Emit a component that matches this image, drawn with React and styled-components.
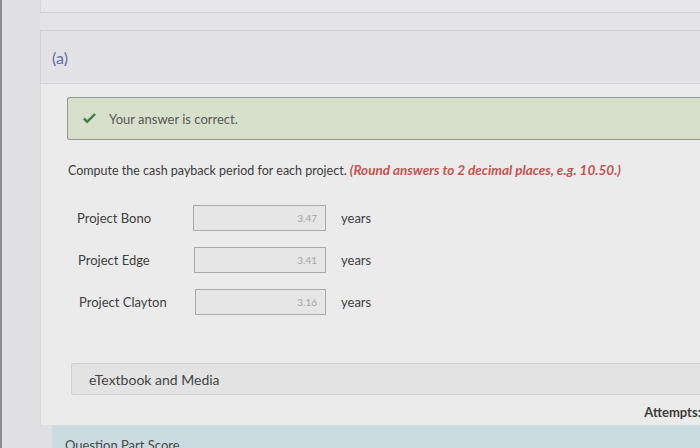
import React from "react";
import styled, { createGlobalStyle } from "styled-components";

const Global = createGlobalStyle`
  html, body {
    margin: 0;
    padding: 0;
    width: 700px;
    height: 448px;
    overflow: hidden;
    background: #e0dfe2;
    font-family: Lato, "Open Sans", "Liberation Sans", sans-serif;
  }
`;

const Page = styled.div`
  display: flex;
  width: 700px;
  height: 448px;
  overflow: hidden;
`;

const Rail = styled.div`
  width: 38px;
  flex-shrink: 0;
  background: #e0dfe2;
  border-left: 2px solid #8c8b8e;
`;

const Main = styled.div`
  flex: 1;
  display: flex;
  flex-direction: column;
  min-width: 0;
`;

const PrevCard = styled.div`
  height: 12px;
  background: #e7e6e9;
  border-bottom: 1px solid #cfced2;
  border-left: 1px solid #d6d5d8;
`;

const Spacer = styled.div`
  height: 17px;
  background: #e4e3e6;
`;

const PartHeader = styled.div`
  height: 52px;
  display: flex;
  align-items: center;
  padding-left: 11px;
  background: #e2e1e4;
  border: 1px solid #d2d1d5;
  border-right: none;
  color: #5b6ea6;
  font-size: 16px;
`;

const Content = styled.div`
  background: #ebebeb;
  border-left: 1px solid #d9d9db;
  padding: 13px 0 0 26px;
  height: 328px;
  display: flex;
  flex-direction: column;
`;

const Correct = styled.div`
  height: 41px;
  display: flex;
  align-items: center;
  gap: 12px;
  padding-left: 14px;
  margin-right: -4px;
  background: #d6e0cb;
  border: 1px solid #8e9b86;
  border-right: none;
  border-radius: 3px 0 0 3px;
  color: #575757;
  font-size: 13px;
`;

const Prompt = styled.p`
  margin: 22px 0 0 1px;
  font-size: 12.5px;
  line-height: 16px;
  color: #3b3b3b;
`;

const Hint = styled.span`
  color: #c4534f;
  font-weight: 700;
  font-style: italic;
  font-size: 13.5px;
`;

const Rows = styled.div`
  display: flex;
  flex-direction: column;
  gap: 16px;
  margin-top: 26px;
  padding-left: ${(p) => p.$indent}px;
`;

const Row = styled.div`
  display: flex;
  align-items: center;
  padding-left: ${(p) => p.$shift || 0}px;
`;

const Label = styled.div`
  width: 116px;
  font-size: 13px;
  color: #3e3e3e;
`;

const Field = styled.div`
  width: ${(p) => p.$width}px;
  height: 24px;
  display: flex;
  align-items: center;
  justify-content: flex-end;
  padding-right: 8px;
  box-sizing: content-box;
  background: #e6e6e6;
  border: 1px solid #a9a9a9;
  font-size: 10px;
  color: #a5a5a5;
`;

const Unit = styled.div`
  margin-left: 15px;
  font-size: 13px;
  color: #3e3e3e;
`;

const Media = styled.div`
  margin: 48px -4px 0 4px;
  height: 30px;
  display: flex;
  align-items: center;
  padding-left: 17px;
  background: #e3e3e3;
  border: 1px solid #d0d0d0;
  border-right: none;
  border-radius: 3px 0 0 3px;
  font-size: 14px;
  color: #444;
`;

const Attempts = styled.div`
  margin-top: 9px;
  align-self: flex-end;
  font-size: 13px;
  font-weight: 700;
  color: #3c3c3c;
  margin-right: -1px;
`;

const ScoreBar = styled.div`
  margin-left: 12px;
  flex: 1;
  background: #cadcdf;
  display: flex;
  align-items: flex-end;
  padding-left: 13px;
  font-size: 13px;
  color: #4a4a4a;
  line-height: 1;
  overflow: hidden;
`;

const ScoreText = styled.span`
  margin-bottom: -4px;
`;

const Check = () => (
  <svg width="15" height="12" viewBox="0 0 15 12">
    <path d="M1 6.5 L5.2 10.5 L14 1.8 L12.2 0.2 L5.2 7 L2.8 4.6 Z" fill="#4c7a47" />
  </svg>
);

const projects = [
  { name: "Project Bono", value: "3.47", shift: 0, width: 123 },
  { name: "Project Edge", value: "3.41", shift: 1, width: 122 },
  { name: "Project Clayton", value: "3.16", shift: 2, width: 121 },
];

export default function App() {
  return (
    <Page>
      <Global />
      <Rail />
      <Main>
        <PrevCard />
        <Spacer />
        <PartHeader>(a)</PartHeader>
        <Content>
          <Correct>
            <Check />
            Your answer is correct.
          </Correct>
          <Prompt>
            Compute the cash payback period for each project.{" "}
            <Hint>(Round answers to 2 decimal places, e.g. 10.50.)</Hint>
          </Prompt>
          <Rows $indent={10}>
            {projects.map((p) => (
              <Row key={p.name} $shift={p.shift}>
                <Label>{p.name}</Label>
                <Field $width={p.width}>{p.value}</Field>
                <Unit>years</Unit>
              </Row>
            ))}
          </Rows>
          <Media>eTextbook and Media</Media>
          <Attempts>Attempts:</Attempts>
        </Content>
        <ScoreBar>
          <ScoreText>Question Part Score</ScoreText>
        </ScoreBar>
      </Main>
    </Page>
  );
}
